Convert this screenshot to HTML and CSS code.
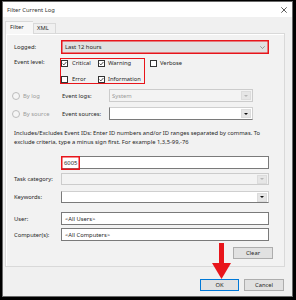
FILE: index.html
```html
<!DOCTYPE html>
<html>
<head>
<meta charset="utf-8">
<title>Filter Current Log</title>
<link rel="stylesheet" href="styles.css">
</head>
<body>
<div class="window">
  <div class="titlebar">
    <span class="title">Filter Current Log</span>
    <svg class="close" width="6" height="6" viewBox="0 0 6 6"><path d="M0.3 0.3L5.7 5.7M5.7 0.3L0.3 5.7" stroke="#333" stroke-width="0.8" fill="none"/></svg>
  </div>
  <div class="tabs">
    <div class="tab active">Filter</div>
    <div class="tab">XML</div>
  </div>
  <div class="panel">
    <div class="row r-logged">
      <span class="label">Logged:</span>
      <div class="combo logged">
        <span class="ctext">Last 12 hours</span>
        <svg class="chev" width="5" height="3" viewBox="0 0 5 3"><path d="M0.3 0.3L2.5 2.5L4.7 0.3" stroke="#777" stroke-width="0.7" fill="none"/></svg>
      </div>
    </div>
    <div class="row r-level">
      <span class="label">Event level:</span>
      <div class="levels">
        <div class="cbrow">
          <span class="cbitem w-crit"><span class="cb"><svg width="5" height="5" viewBox="0 0 5 5"><path d="M0.6 2.6L1.9 3.9L4.4 1" stroke="#222" stroke-width="0.8" fill="none"/></svg></span>Critical</span>
          <span class="cbitem"><span class="cb"><svg width="5" height="5" viewBox="0 0 5 5"><path d="M0.6 2.6L1.9 3.9L4.4 1" stroke="#222" stroke-width="0.8" fill="none"/></svg></span>Warning</span>
        </div>
        <div class="cbrow">
          <span class="cbitem w-crit"><span class="cb"></span>Error</span>
          <span class="cbitem"><span class="cb"><svg width="5" height="5" viewBox="0 0 5 5"><path d="M0.6 2.6L1.9 3.9L4.4 1" stroke="#222" stroke-width="0.8" fill="none"/></svg></span>Information</span>
        </div>
      </div>
      <span class="cbitem verbose"><span class="cb"></span>Verbose</span>
    </div>
    <div class="row r-bylog">
      <span class="radio-wrap"><span class="radio"></span><span class="dis">By log</span></span>
      <span class="label2">Event logs:</span>
      <div class="combo disabled short">
        <span class="ctext dis">System</span>
        <span class="dbtn"><span class="tri gray"></span></span>
      </div>
    </div>
    <div class="row r-bysource">
      <span class="radio-wrap"><span class="radio"></span><span class="dis">By source</span></span>
      <span class="label2">Event sources:</span>
      <div class="combo white short">
        <span class="ctext"></span>
        <span class="dbtn"><span class="tri"></span></span>
      </div>
    </div>
    <p class="desc">Includes/Excludes Event IDs: Enter ID numbers and/or ID ranges separated by commas. To exclude criteria, type a minus sign first. For example 1,3,5-99,-76</p>
    <div class="row r-id">
      <span class="label"></span>
      <div class="textbox"><span class="idval">6005</span></div>
    </div>
    <div class="row r-task">
      <span class="label">Task category:</span>
      <div class="combo disabled">
        <span class="ctext"></span>
        <span class="dbtn"><span class="tri gray"></span></span>
      </div>
    </div>
    <div class="row r-kw">
      <span class="label">Keywords:</span>
      <div class="combo white">
        <span class="ctext"></span>
        <span class="dbtn"><span class="tri"></span></span>
      </div>
    </div>
    <div class="row r-user">
      <span class="label">User:</span>
      <div class="textbox"><span class="tval">&lt;All Users&gt;</span></div>
    </div>
    <div class="row r-comp">
      <span class="label">Computer(s):</span>
      <div class="textbox"><span class="tval">&lt;All Computers&gt;</span></div>
    </div>
    <div class="row r-clear">
      <button class="btn clear">Clear</button>
    </div>
  </div>
  <div class="actions">
    <button class="btn ok">OK</button>
    <button class="btn">Cancel</button>
  </div>
  <svg class="arrow" width="19" height="36" viewBox="0 0 19 36"><rect x="7" y="0" width="5" height="21" fill="#e8151b"/><polygon points="0,20 19,20 9.5,36" fill="#e8151b"/></svg>
</div>
</body>
</html>
```

FILE: styles.css
```css
* { box-sizing: border-box; }
html, body { margin: 0; padding: 0; }
body {
  width: 296px;
  height: 300px;
  background: #000;
  overflow: hidden;
  font-family: "Noto Sans", "Open Sans", sans-serif;
  font-size: 5.8px;
  line-height: 8px;
  color: #262626;
}
.window {
  position: relative;
  margin: 1px 0 0 2px;
  width: 291px;
  height: 296px;
  background: #f0f0f0;
  border: 1px solid #6a6a6a;
  display: flex;
  flex-direction: column;
}
.titlebar {
  height: 15px;
  background: #fff;
  display: flex;
  align-items: center;
  justify-content: space-between;
  padding: 0 5px 0 4px;
  flex: none;
}
.title { color: #333; }
.tabs {
  height: 16px;
  display: flex;
  align-items: flex-end;
  padding-left: 2px;
  flex: none;
}
.tab {
  height: 10px;
  width: 23px;
  border: 1px solid #d9d9d9;
  border-bottom: none;
  background: #f0f0f0;
  padding-left: 3px;
  line-height: 9px;
}
.tab.active {
  width: 28px;
  height: 13px;
  margin-bottom: -1px;
  position: relative;
  z-index: 1;
  padding-left: 4px;
  line-height: 11px;
  background: #f7f7f7;
  border-right: none;
}
.panel {
  margin-left: 2px;
  width: 280px;
  height: 234px;
  border: 1px solid #d9d9d9;
  box-shadow: inset 1px 1px 0 #fff;
  padding: 0 15px 0 6px;
  display: flex;
  flex-direction: column;
  flex: none;
  background: #f2f2f2;
}
.row { display: flex; align-items: center; flex: none; }
.label { width: 49px; padding-left: 2px; flex: none; }
.combo, .textbox { flex: 1; display: flex; align-items: center; height: 100%; }
.r-logged { margin-top: 6px; height: 14px; }
.combo.logged {
  border: 1px solid #e8151b;
  background: #e1e1e1;
  padding: 0 3px 0 3px;
  justify-content: space-between;
  box-shadow: inset 0 0 0 0.5px #e8151b;
}
.r-level { margin-top: 4px; height: 26px; align-items: flex-start; }
.r-level .label { line-height: 8px; }
.levels {
  width: 85px;
  height: 26px;
  border: 1px solid #e8151b;
  margin-left: -1px;
  padding-top: 1px;
  flex: none;
}
.cbrow { display: flex; height: 7px; align-items: center; }
.cbrow + .cbrow { margin-top: 9px; }
.cbitem { display: flex; align-items: center; white-space: nowrap; line-height: 7px; }
.w-crit { width: 37px; }
.cb {
  width: 7px;
  height: 7px;
  border: 1px solid #333;
  background: #fff;
  margin-right: 3px;
  display: flex;
  align-items: center;
  justify-content: center;
  flex: none;
}
.w-crit .cb { margin-right: 4px; }
.verbose { margin-left: 5px; margin-top: 2px; }
.r-bylog { margin-top: 5px; height: 13px; }
.r-bysource { margin-top: 5px; height: 13px; }
.radio-wrap { width: 50px; display: flex; align-items: center; flex: none; }
.radio {
  width: 8px;
  height: 8px;
  border: 1px solid #bcbcbc;
  border-radius: 50%;
  background: #f5f5f5;
  margin-right: 3px;
  flex: none;
}
.dis { color: #9a9a9a; }
.label2 { width: 47px; flex: none; }
.combo.short { flex: none; width: 144px; }
.combo.disabled { border: 1px solid #cccccc; background: #f3f3f3; padding-left: 2px; justify-content: space-between; }
.combo.white { border: 1px solid #7a7a7a; background: #fff; justify-content: space-between; border-top-color: #cfcfcf; border-right-color: #cfcfcf; }
.dbtn {
  width: 10px;
  height: 9px;
  margin-right: 1px;
  background: #e6e6e6;
  border: 1px solid #dcdcdc;
  display: flex;
  align-items: center;
  justify-content: center;
}
.tri {
  width: 0; height: 0;
  border-left: 2.5px solid transparent;
  border-right: 2.5px solid transparent;
  border-top: 2.5px solid #111;
}
.tri.gray { border-top-color: #b5b5b5; }
.desc {
  margin: 9px 0 0 2px;
  height: 18px;
  line-height: 9px;
  width: 256px;
  flex: none;
}
.r-id { margin-top: 9px; height: 14px; }
.textbox { border: 1px solid #7a7a7a; background: #fff; }
.r-id .textbox { height: 13px; align-self: flex-start; }
.idval {
  height: 14px;
  width: 19px;
  margin: -1px 0 -1px -1px;
  border: 1px solid #e8151b;
  box-shadow: inset 0 0 0 0.5px #e8151b;
  padding-left: 2px;
  display: flex;
  align-items: center;
}
.tval { padding-left: 3px; }
.r-task { margin-top: 3px; height: 12px; }
.r-kw { margin-top: 6px; height: 12px; }
.r-user { margin-top: 9px; height: 13px; }
.r-comp { margin-top: 3px; height: 13px; }
.r-clear { margin-top: 6px; height: 12px; justify-content: flex-end; margin-right: -4px; }
.btn {
  font: inherit;
  color: #262626;
  height: 12px;
  width: 40px;
  padding: 0;
  border: 1px solid #adadad;
  background: #e1e1e1;
  line-height: 10px;
}
.actions {
  display: flex;
  justify-content: flex-end;
  gap: 5px;
  padding-right: 8px;
  margin-top: 12px;
}
.btn.ok { border: 1px solid #0078d7; width: 39px; }
.arrow { position: absolute; left: 209px; top: 241px; }
```
